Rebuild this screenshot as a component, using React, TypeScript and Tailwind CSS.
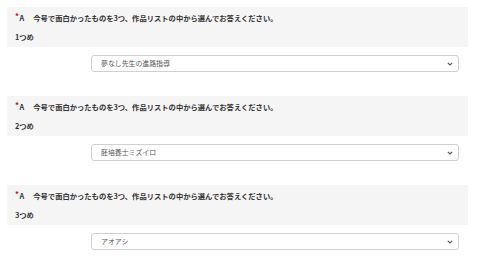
const questions = [
  { label: "1つめ", value: "夢なし先生の進路指導" },
  { label: "2つめ", value: "胚培養士ミズイロ" },
  { label: "3つめ", value: "アオアシ" },
];

function Chevron() {
  return (
    <svg width="6" height="4" viewBox="0 0 6 4" className="shrink-0">
      <path d="M0.8 0.8 L3 3 L5.2 0.8" fill="none" stroke="#555" strokeWidth="1.1" />
    </svg>
  );
}

export default function App() {
  return (
    <div
      className="w-[480px] h-[273px] bg-white overflow-hidden pt-[7px] pl-[7px] pr-[12px]"
      style={{ fontFamily: '"Noto Sans CJK JP", "Noto Sans", sans-serif' }}
    >
      {questions.map((q) => (
        <div key={q.label} className="mb-[24px]">
          <div className="bg-[#f5f5f5] h-[40px] pl-[8px] pt-[6px]">
            <div className="flex items-center h-[12px] text-[7.3px] font-bold text-[#333] leading-none">
              <span className="text-[#e60012] text-[8px] self-start -mt-[1px]">*</span>
              <span className="ml-[0.5px]">A</span>
              <span className="ml-[9px]">今号で面白かったものを3つ、作品リストの中から選んでお答えください。</span>
            </div>
            <div className="mt-[7px] h-[12px] flex items-center text-[7.3px] font-bold text-[#333] leading-none">
              {q.label}
            </div>
          </div>
          <div className="mt-[8px] ml-[84px] w-[368px] h-[17px] border border-[#d0d0d0] rounded-[3px] bg-white flex items-center justify-between pl-[9px] pr-[5px]">
            <span className="text-[6.9px] text-[#555] leading-none">{q.value}</span>
            <Chevron />
          </div>
        </div>
      ))}
    </div>
  );
}
